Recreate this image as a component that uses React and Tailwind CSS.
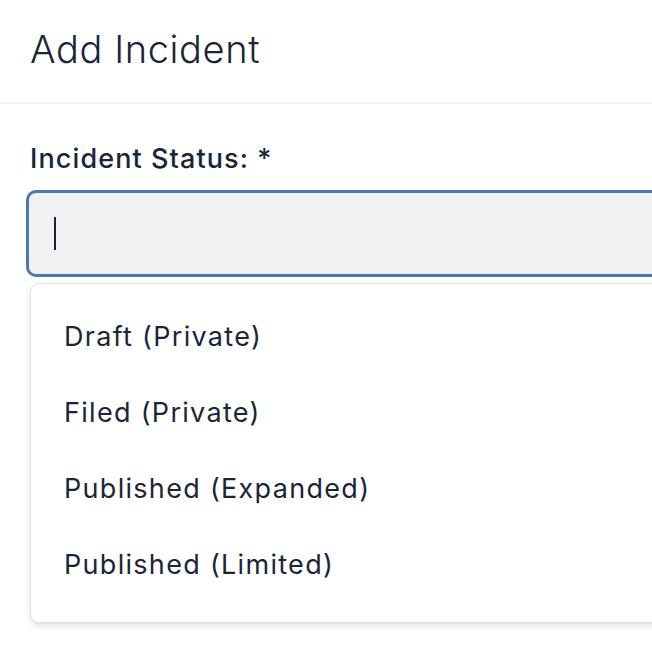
export default function App() {
  const options = ['Draft (Private)', 'Filed (Private)', 'Published (Expanded)', 'Published (Limited)'];

  return (
    <div className="w-[652px] h-[652px] overflow-hidden bg-white text-[#1b2538]" style={{ fontFamily: 'Inter, "Noto Sans", sans-serif' }}>
      <div className="w-[760px]">
        <div className="h-[104px] border-b-2 border-[#f1f1f1] pl-[30px] pt-[27px]">
          <h1 className="text-[38px] font-light tracking-[0.6px] leading-[44px]">Add Incident</h1>
        </div>

        <div className="pl-[26px] pt-[37px]">
          <label className="block pl-[4px] text-[27px] font-medium tracking-[1.1px] leading-[36px]">Incident Status: *</label>
          <div className="mt-[13px] h-[87px] rounded-[10px] border-[3px] border-[#4a78b7] bg-[#f1f1f1] flex items-center pl-[25px]">
            <div className="w-[2px] h-[33px] bg-[#1b2538]" />
          </div>

          <ul className="ml-[4px] mt-[6px] rounded-[9px] border border-[#e2e2e2] bg-white pt-[14px] pb-[20px] shadow-[0_3px_6px_rgba(0,0,0,0.12)]">
            {options.map((o) => (
              <li key={o} className="h-[76px] flex items-center pl-[33px] text-[27px] tracking-[1.3px] leading-none">
                {o}
              </li>
            ))}
          </ul>
        </div>
      </div>
    </div>
  );
}
